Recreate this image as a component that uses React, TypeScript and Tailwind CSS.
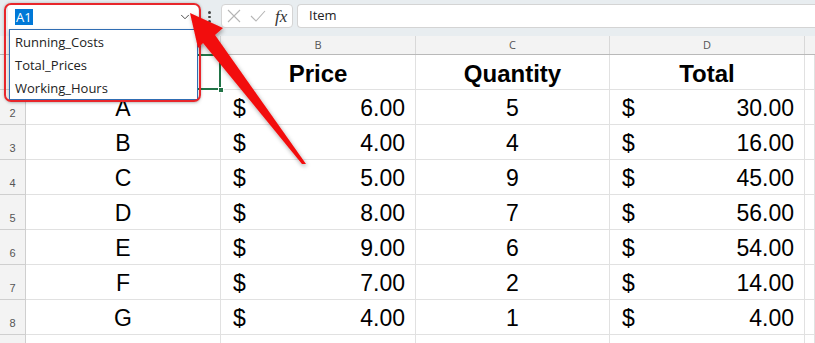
import { ChevronDown } from 'lucide-react';

type Row = { n: number; item: string; price: string; qty: string; total: string };

const rows: Row[] = [
  { n: 2, item: 'A', price: '6.00', qty: '5', total: '30.00' },
  { n: 3, item: 'B', price: '4.00', qty: '4', total: '16.00' },
  { n: 4, item: 'C', price: '5.00', qty: '9', total: '45.00' },
  { n: 5, item: 'D', price: '8.00', qty: '7', total: '56.00' },
  { n: 6, item: 'E', price: '9.00', qty: '6', total: '54.00' },
  { n: 7, item: 'F', price: '7.00', qty: '2', total: '14.00' },
  { n: 8, item: 'G', price: '4.00', qty: '1', total: '4.00' },
];

const names = ['Running_Costs', 'Total_Prices', 'Working_Hours'];

const cell = 'h-[35px] shrink-0 border-r border-b border-[#e1e1e1]';
const rowHead =
  'w-[26px] shrink-0 border-r border-b border-[#cfcfcf] bg-[#f3f3f3] flex items-end justify-center pb-[3px] text-[11px] text-[#555]';

function Money({ value }: { value: string }) {
  return (
    <div className="flex h-full items-center justify-between pl-[12px] pr-[10px] pt-[3px]">
      <span>$</span>
      <span>{value}</span>
    </div>
  );
}

export default function App() {
  return (
    <div className="relative h-[343px] w-[815px] overflow-hidden bg-white font-['Liberation_Sans',Arial,sans-serif] text-black">
      {/* Formula bar */}
      <div className="flex h-[36px] items-start bg-[#e8edf0] pt-[4px] font-['Open_Sans',sans-serif] text-[13px]">
        <div className="ml-[8px] flex h-[25px] w-[190px] items-center justify-between bg-white pl-[7px] pr-[6px]">
          <span className="bg-[#0078d7] px-[1px] leading-[16px] text-white">A1</span>
          <ChevronDown size={14} strokeWidth={1.5} className="text-[#333]" />
        </div>
        <div className="flex w-[23px] flex-col items-center gap-[2px] pt-[7px]">
          <span className="h-[2.5px] w-[2.5px] rounded-full bg-[#444]" />
          <span className="h-[2.5px] w-[2.5px] rounded-full bg-[#444]" />
          <span className="h-[2.5px] w-[2.5px] rounded-full bg-[#444]" />
        </div>
        <div className="flex h-[24px] w-[72px] items-center gap-[9px] rounded-[4px] border border-[#d4d4d4] bg-white pl-[5px]">
          <svg width="14" height="14" viewBox="0 0 14 14" fill="none" stroke="#b5b5b5" strokeWidth="1.1">
            <path d="M1 1 L13 13 M13 1 L1 13" />
          </svg>
          <svg width="16" height="12" viewBox="0 0 16 12" fill="none" stroke="#b5b5b5" strokeWidth="1.1">
            <path d="M1 6 L6 11 L15 1" />
          </svg>
          <span className="font-['Liberation_Serif',serif] text-[17px] italic leading-none text-[#333]">fx</span>
        </div>
        <div className="ml-[4px] flex h-[24px] flex-1 items-center rounded-l-[4px] border border-r-0 border-[#d4d4d4] bg-white pl-[11px] text-[#222]">
          Item
        </div>
      </div>

      {/* Column headers */}
      <div className="flex h-[19px] border-b border-[#b9b9b9] bg-[#f3f3f3] font-['Open_Sans',sans-serif] text-[11px] text-[#555]">
        <div className="w-[26px] shrink-0 border-r border-[#cfcfcf]" />
        {[
          ['A', 'w-[195px]'],
          ['B', 'w-[195px]'],
          ['C', 'w-[194px]'],
          ['D', 'w-[195px]'],
        ].map(([l, w]) => (
          <div key={l} className={`${w} flex shrink-0 items-center justify-center border-r border-[#d8d8d8]`}>
            {l}
          </div>
        ))}
        <div className="flex-1" />
      </div>

      {/* Header row */}
      <div className="flex text-[24px] font-bold">
        <div className={`${rowHead} h-[35px]`}>1</div>
        <div className={`${cell} relative w-[195px]`}>
          <div className="flex h-full items-center justify-center pt-[3px]">Item</div>
          <div className="absolute -left-[1px] -top-[1px] h-[36px] w-[196px] border-2 border-[#217346]" />
          <div className="absolute -bottom-[4px] -right-[4px] h-[6px] w-[6px] border border-white bg-[#217346]" />
        </div>
        <div className={`${cell} flex w-[195px] items-center justify-center pt-[3px]`}>Price</div>
        <div className={`${cell} flex w-[194px] items-center justify-center pt-[3px]`}>Quantity</div>
        <div className={`${cell} flex w-[195px] items-center justify-center pt-[3px]`}>Total</div>
        <div className={`${cell} flex-1`} />
      </div>

      {/* Data rows */}
      {rows.map((r) => (
        <div key={r.n} className="flex text-[23px]">
          <div className={`${rowHead} h-[35px]`}>{r.n}</div>
          <div className={`${cell} flex w-[195px] items-center justify-center pt-[3px]`}>{r.item}</div>
          <div className={`${cell} w-[195px]`}>
            <Money value={r.price} />
          </div>
          <div className={`${cell} flex w-[194px] items-center justify-center pt-[3px]`}>{r.qty}</div>
          <div className={`${cell} w-[195px]`}>
            <Money value={r.total} />
          </div>
          <div className={`${cell} flex-1`} />
        </div>
      ))}
      <div className="flex">
        <div className={`${rowHead} h-[35px]`} />
        <div className={`${cell} w-[195px]`} />
        <div className={`${cell} w-[195px]`} />
        <div className={`${cell} w-[194px]`} />
        <div className={`${cell} w-[195px]`} />
        <div className={`${cell} flex-1`} />
      </div>

      {/* Name box dropdown */}
      <div className="absolute left-[9px] top-[29px] h-[71px] w-[189px] border border-[#2f6db3] bg-white pt-[1px] font-['Open_Sans',sans-serif] text-[13px] text-[#222] shadow-[0_2px_4px_rgba(0,0,0,0.25)]">
        {names.map((n) => (
          <div key={n} className="flex h-[23px] items-center pl-[5px]">
            {n}
          </div>
        ))}
      </div>

      {/* Annotation outline */}
      <div className="pointer-events-none absolute left-[4px] top-[3px] h-[99px] w-[197px] rounded-[7px] border-2 border-[#e8262b] shadow-[0_0_3px_rgba(0,0,0,0.25)]" />

      {/* Annotation arrow */}
      <svg className="pointer-events-none absolute left-0 top-0" width="815" height="343" viewBox="0 0 815 343">
        <defs>
          <filter id="sh" x="-20%" y="-20%" width="140%" height="140%">
            <feDropShadow dx="1" dy="2" stdDeviation="2" floodColor="#000" floodOpacity="0.35" />
          </filter>
        </defs>
        <polygon
          points="190,13 223,28 215,35 306,164 302,164 203,43 198,48"
          fill="#f20d0d"
          filter="url(#sh)"
        />
      </svg>
    </div>
  );
}
